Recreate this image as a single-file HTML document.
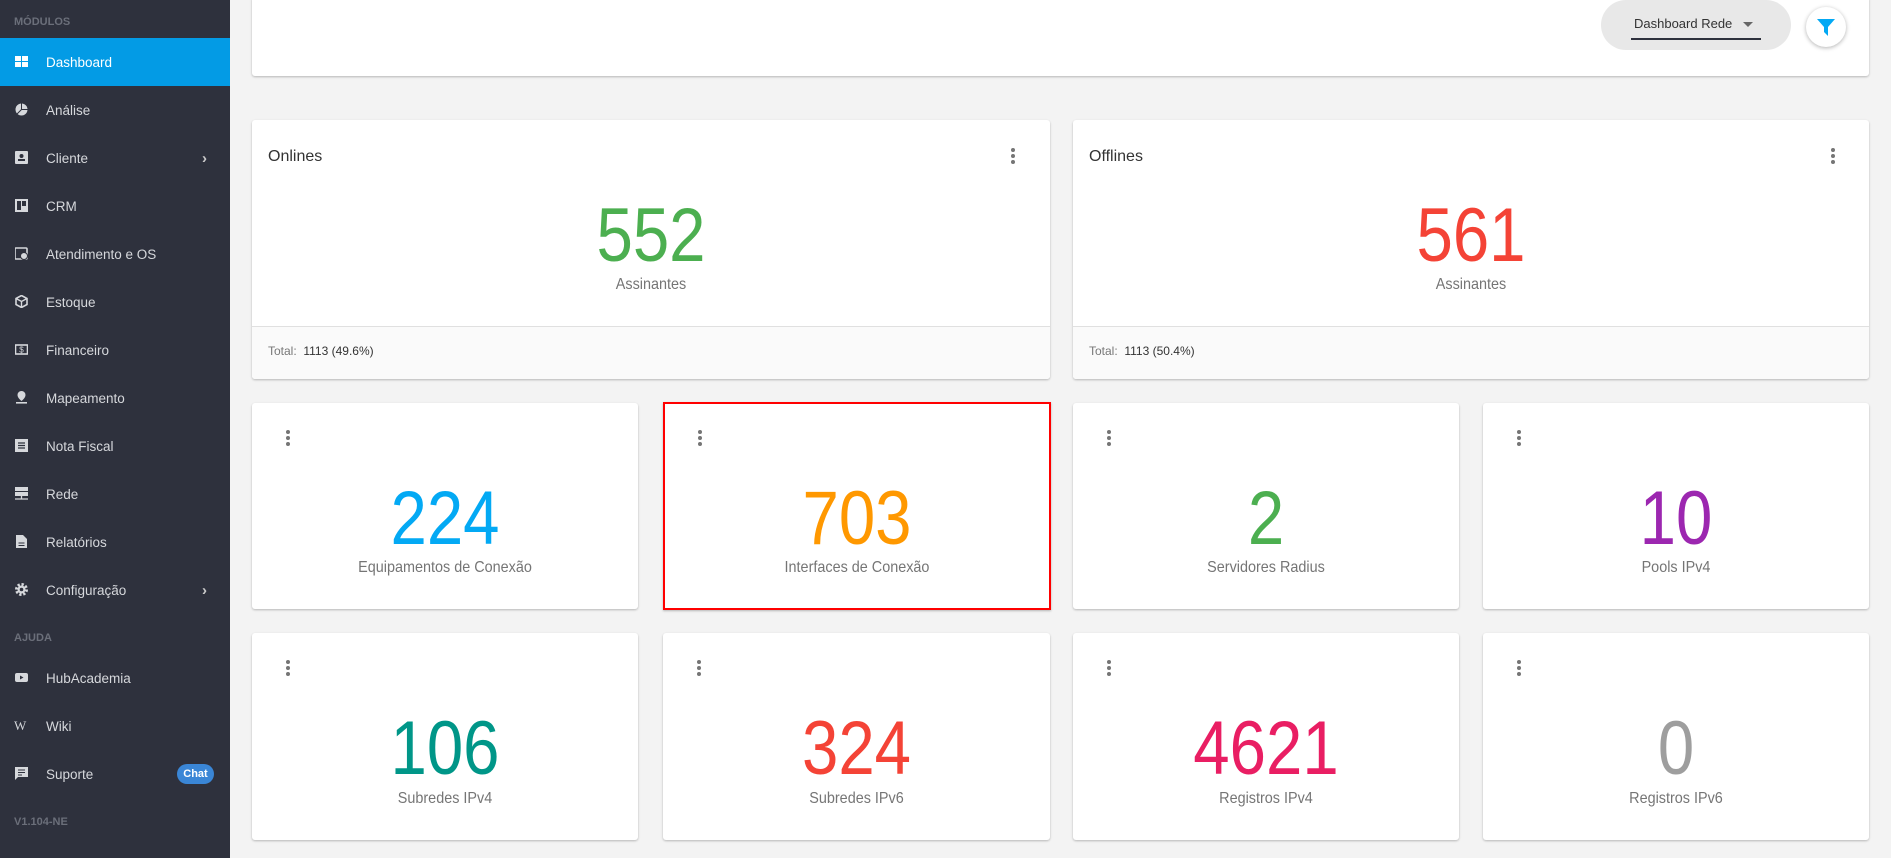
<!DOCTYPE html>
<html><head><meta charset="utf-8"><style>
*{box-sizing:border-box;margin:0;padding:0}
body{width:1891px;height:858px;overflow:hidden;background:#f3f3f3;font-family:"Liberation Sans",sans-serif;position:relative}
#sb{position:absolute;left:0;top:0;width:230px;height:858px;background:#2e313d}
.sec{position:absolute;left:14px;font-size:11px;font-weight:bold;color:#6b6f7a;transform:translateY(-50%)}
.it{position:absolute;left:0;width:230px;height:48px;color:#d6d8dc;font-size:13.5px;display:flex;align-items:center}
.it .ic{position:absolute;left:15px;width:13px;height:13px;top:17px}
.it span.t{position:absolute;left:46px}
.it .ch{position:absolute;left:202px;font-size:15px;font-weight:bold;color:#ccc}
.act{background:#039be5;color:#fff}
.card{position:absolute;background:#fff;border-radius:3px;box-shadow:0 1px 2px rgba(0,0,0,.25)}
.dots{position:absolute;width:4px;height:16px}
.dots i{display:block;width:4px;height:4px;border-radius:2px;background:#757575;margin-bottom:2px}
.num{position:absolute;left:0;right:0;text-align:center;font-size:76px;line-height:76px;transform:scaleX(.86)}
.lbl{position:absolute;left:0;right:0;text-align:center;font-size:16px;color:#757575;transform:scaleX(.9);margin-top:4px}
</style></head><body>
<div id="sb">
<div class="sec" style="top:22px">MÓDULOS</div>
<div class="it act" style="top:38px"><svg class="ic" viewBox="0 0 13 13"><rect x="0" y="1" width="6" height="5" fill="#fff"/><rect x="7" y="1" width="6" height="5" fill="#fff"/><rect x="0" y="7" width="6" height="5" fill="#fff"/><rect x="7" y="7" width="6" height="5" fill="#fff"/></svg><span class="t">Dashboard</span></div>
<div class="it" style="top:86px"><svg class="ic" viewBox="0 0 13 13"><circle cx="6.5" cy="6.5" r="6" fill="#d6d8dc"/><path d="M6.5 6.5V0M6.5 6.5H13M6.5 6.5L2 11" stroke="#2e313d" stroke-width="1"/></svg><span class="t">Análise</span></div>
<div class="it" style="top:134px"><svg class="ic" viewBox="0 0 13 13"><rect x="0" y="0" width="13" height="13" rx="1" fill="#d6d8dc"/><circle cx="6.5" cy="5" r="2" fill="#2e313d"/><rect x="3" y="8" width="7" height="2" fill="#2e313d"/></svg><span class="t">Cliente</span><span class="ch">›</span></div>
<div class="it" style="top:182px"><svg class="ic" viewBox="0 0 13 13"><rect x="0" y="0" width="13" height="13" fill="#d6d8dc"/><rect x="2" y="2" width="4" height="9" fill="#2e313d"/><rect x="7" y="2" width="4" height="5" fill="#2e313d"/></svg><span class="t">CRM</span></div>
<div class="it" style="top:230px"><svg class="ic" viewBox="0 0 13 13"><rect x="0" y="1" width="12" height="11" rx="1" fill="none" stroke="#d6d8dc" stroke-width="1.6"/><circle cx="9" cy="9" r="3.5" fill="#d6d8dc" stroke="#2e313d"/></svg><span class="t">Atendimento e OS</span></div>
<div class="it" style="top:278px"><svg class="ic" viewBox="0 0 13 13"><path d="M6.5 0.5L12 3.5V9.5L6.5 12.5L1 9.5V3.5Z" fill="none" stroke="#d6d8dc" stroke-width="1.6"/><path d="M1 3.5L6.5 6.5L12 3.5M6.5 6.5V12.5" stroke="#d6d8dc" stroke-width="1.4" fill="none"/></svg><span class="t">Estoque</span></div>
<div class="it" style="top:326px"><svg class="ic" viewBox="0 0 13 13"><rect x="0.5" y="2" width="12" height="9" fill="none" stroke="#d6d8dc" stroke-width="1.6"/><text x="6.5" y="9.5" font-size="8" text-anchor="middle" fill="#d6d8dc" font-family="Liberation Sans">$</text></svg><span class="t">Financeiro</span></div>
<div class="it" style="top:374px"><svg class="ic" viewBox="0 0 13 13"><path d="M6.5 0A4 4 0 0 1 10.5 4C10.5 7 6.5 10 6.5 10S2.5 7 2.5 4A4 4 0 0 1 6.5 0Z" fill="#d6d8dc"/><rect x="1" y="11" width="11" height="1.6" fill="#d6d8dc"/></svg><span class="t">Mapeamento</span></div>
<div class="it" style="top:422px"><svg class="ic" viewBox="0 0 13 13"><rect x="0" y="0" width="13" height="13" fill="#d6d8dc"/><path d="M3 4H10M3 6.5H10M3 9H10" stroke="#2e313d" stroke-width="1.2"/></svg><span class="t">Nota Fiscal</span></div>
<div class="it" style="top:470px"><svg class="ic" viewBox="0 0 13 13"><rect x="0" y="0" width="13" height="4" fill="#d6d8dc"/><rect x="0" y="5" width="13" height="4" fill="#d6d8dc"/><path d="M6.5 9V12M0 12H13" stroke="#d6d8dc" stroke-width="1.3"/></svg><span class="t">Rede</span></div>
<div class="it" style="top:518px"><svg class="ic" viewBox="0 0 13 13"><path d="M1 0H8L12 4V13H1Z" fill="#d6d8dc"/><path d="M3.5 8H9.5M3.5 10.5H9.5" stroke="#2e313d" stroke-width="1"/></svg><span class="t">Relatórios</span></div>
<div class="it" style="top:566px"><svg class="ic" viewBox="0 0 13 13"><circle cx="6.5" cy="6.5" r="5" fill="none" stroke="#d6d8dc" stroke-width="3" stroke-dasharray="2.2 1.7"/><circle cx="6.5" cy="6.5" r="4" fill="#d6d8dc"/><circle cx="6.5" cy="6.5" r="1.8" fill="#2e313d"/></svg><span class="t">Configuração</span><span class="ch">›</span></div>
<div class="sec" style="top:638px">AJUDA</div>
<div class="it" style="top:654px"><svg class="ic" viewBox="0 0 13 13"><rect x="0" y="2" width="13" height="9" rx="2" fill="#d6d8dc"/><path d="M5 4.5V8.5L8.5 6.5Z" fill="#2e313d"/></svg><span class="t">HubAcademia</span></div>
<div class="it" style="top:702px"><span style="position:absolute;left:14px;font-family:'Liberation Serif',serif;font-size:13px">W</span><span class="t">Wiki</span></div>
<div class="it" style="top:750px"><svg class="ic" viewBox="0 0 13 13"><path d="M0 0H13V10H3L0 13Z" fill="#d6d8dc"/><path d="M3 3H10M3 5.5H10M3 8H7" stroke="#2e313d" stroke-width="1"/></svg><span class="t">Suporte</span><span style="position:absolute;left:177px;top:14px;width:37px;height:20px;border-radius:10px;background:#3a86d6;color:#fff;font-size:11px;font-weight:bold;text-align:center;line-height:20px">Chat</span></div>
<div class="sec" style="top:822px">V1.104-NE</div>
</div>

<div class="card" style="left:252px;top:-4px;width:1617px;height:80px">
 <div style="position:absolute;left:1349px;top:4px;width:190px;height:50px;border-radius:25px;background:#e8e8e8"></div>
 <div style="position:absolute;left:1382px;top:20px;font-size:13px;color:#333">Dashboard Rede</div>
 <div style="position:absolute;left:1491px;top:26px;width:0;height:0;border-left:5px solid transparent;border-right:5px solid transparent;border-top:5px solid #666"></div>
 <div style="position:absolute;left:1379px;top:42px;width:130px;height:2px;background:#2e313d"></div>
 <div style="position:absolute;left:1554px;top:11px;width:40px;height:40px;border-radius:20px;background:#fff;box-shadow:0 1px 4px rgba(0,0,0,.3)"><svg style="position:absolute;left:10px;top:10px" width="20" height="20" viewBox="0 0 20 20"><path d="M1 2H19L12 10V19L8 15V10Z" fill="#03a9f4"/></svg></div>
</div>

<div class="card" style="left:252px;top:120px;width:798px;height:259px">
 <div style="position:absolute;left:16px;top:28px;font-size:16px;color:#333">Onlines</div>
 <div class="dots" style="left:759px;top:28px"><i></i><i></i><i></i></div>
 <div class="num" style="top:78px;color:#4caf50">552</div>
 <div class="lbl" style="top:152px">Assinantes</div>
 <div style="position:absolute;left:0;right:0;top:206px;bottom:0;background:#fafafa;border-top:1px solid #e0e0e0;border-radius:0 0 3px 3px"><span style="position:absolute;left:16px;top:17px;font-size:12px;color:#777">Total: &nbsp;<span style="color:#333">1113 (49.6%)</span></span></div>
</div>
<div class="card" style="left:1073px;top:120px;width:796px;height:259px">
 <div style="position:absolute;left:16px;top:28px;font-size:16px;color:#333">Offlines</div>
 <div class="dots" style="left:758px;top:28px"><i></i><i></i><i></i></div>
 <div class="num" style="top:78px;color:#f44336">561</div>
 <div class="lbl" style="top:152px">Assinantes</div>
 <div style="position:absolute;left:0;right:0;top:206px;bottom:0;background:#fafafa;border-top:1px solid #e0e0e0;border-radius:0 0 3px 3px"><span style="position:absolute;left:16px;top:17px;font-size:12px;color:#777">Total: &nbsp;<span style="color:#333">1113 (50.4%)</span></span></div>
</div>

<div class="card" style="left:252px;top:403px;width:386px;height:206px"><div class="dots" style="left:34px;top:27px"><i></i><i></i><i></i></div><div class="num" style="top:78px;color:#03a9f4">224</div><div class="lbl" style="top:152px">Equipamentos de Conexão</div></div>
<div class="card" style="left:663px;top:402px;width:388px;height:208px;border:2px solid #f00;border-radius:0"><div class="dots" style="left:33px;top:26px"><i></i><i></i><i></i></div><div class="num" style="top:77px;color:#ff9800">703</div><div class="lbl" style="top:151px">Interfaces de Conexão</div></div>
<div class="card" style="left:1073px;top:403px;width:386px;height:206px"><div class="dots" style="left:34px;top:27px"><i></i><i></i><i></i></div><div class="num" style="top:78px;color:#4caf50">2</div><div class="lbl" style="top:152px">Servidores Radius</div></div>
<div class="card" style="left:1483px;top:403px;width:386px;height:206px"><div class="dots" style="left:34px;top:27px"><i></i><i></i><i></i></div><div class="num" style="top:78px;color:#9c27b0">10</div><div class="lbl" style="top:152px">Pools IPv4</div></div>

<div class="card" style="left:252px;top:633px;width:386px;height:207px"><div class="dots" style="left:34px;top:27px"><i></i><i></i><i></i></div><div class="num" style="top:78px;color:#009688">106</div><div class="lbl" style="top:153px">Subredes IPv4</div></div>
<div class="card" style="left:663px;top:633px;width:387px;height:207px"><div class="dots" style="left:34px;top:27px"><i></i><i></i><i></i></div><div class="num" style="top:78px;color:#f44336">324</div><div class="lbl" style="top:153px">Subredes IPv6</div></div>
<div class="card" style="left:1073px;top:633px;width:386px;height:207px"><div class="dots" style="left:34px;top:27px"><i></i><i></i><i></i></div><div class="num" style="top:78px;color:#e91e63">4621</div><div class="lbl" style="top:153px">Registros IPv4</div></div>
<div class="card" style="left:1483px;top:633px;width:386px;height:207px"><div class="dots" style="left:34px;top:27px"><i></i><i></i><i></i></div><div class="num" style="top:78px;color:#9e9e9e">0</div><div class="lbl" style="top:153px">Registros IPv6</div></div>
</body></html>
